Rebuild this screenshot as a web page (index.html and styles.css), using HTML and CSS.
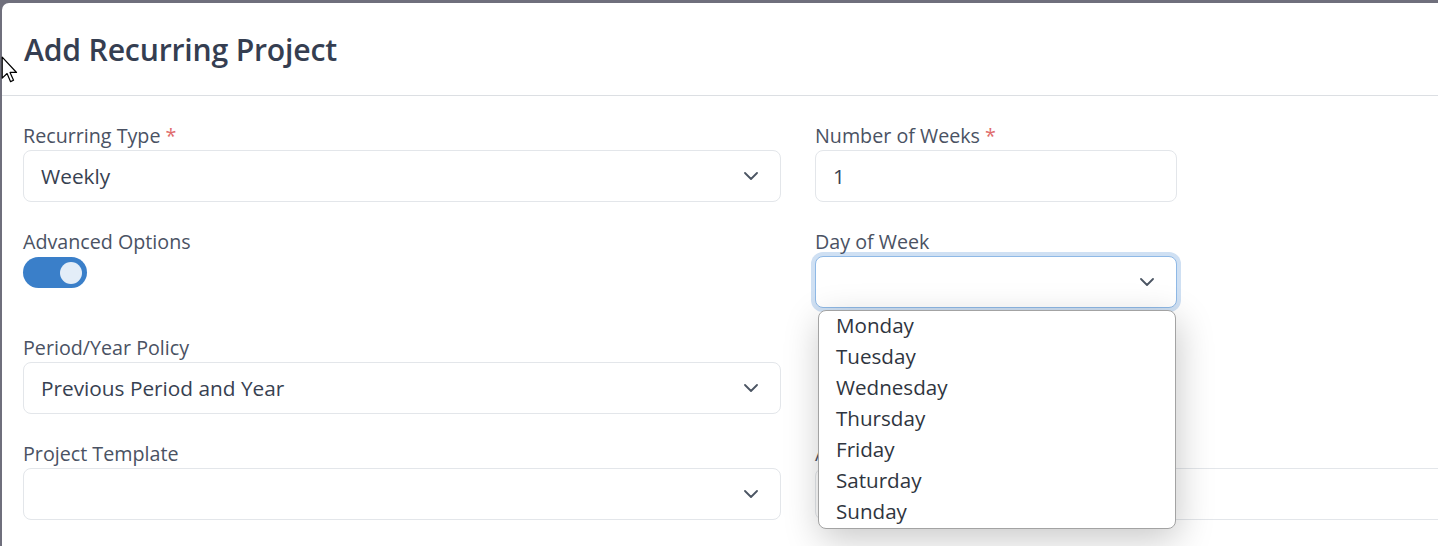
FILE: index.html
```html
<!DOCTYPE html>
<html lang="en">
<head>
<meta charset="utf-8">
<title>Add Recurring Project</title>
<link rel="stylesheet" href="styles.css">
</head>
<body>
<div class="modal">
  <div class="modal-header">
    <h1 class="modal-title">Add Recurring Project</h1>
  </div>
  <div class="modal-body">
    <div class="field">
      <label class="label">Recurring Type <span class="req">*</span></label>
      <div class="control select">
        <span class="value">Weekly</span>
        <svg class="chev" viewBox="0 0 14 8" width="14" height="8"><path d="M1 1l6 6 6-6" fill="none" stroke="#4b5563" stroke-width="1.8" stroke-linecap="round" stroke-linejoin="round"/></svg>
      </div>
    </div>
    <div class="field">
      <label class="label">Number of Weeks <span class="req">*</span></label>
      <div class="control narrow">
        <span class="value">1</span>
      </div>
    </div>
    <div class="field">
      <label class="label">Advanced Options</label>
      <div class="toggle"><span class="knob"></span></div>
    </div>
    <div class="field dow">
      <label class="label">Day of Week</label>
      <div class="control select narrow focused">
        <span class="value"></span>
        <svg class="chev" viewBox="0 0 14 8" width="14" height="8"><path d="M1 1l6 6 6-6" fill="none" stroke="#4b5563" stroke-width="1.8" stroke-linecap="round" stroke-linejoin="round"/></svg>
      </div>
      <ul class="listbox">
        <li>Monday</li>
        <li>Tuesday</li>
        <li>Wednesday</li>
        <li>Thursday</li>
        <li>Friday</li>
        <li>Saturday</li>
        <li>Sunday</li>
      </ul>
    </div>
    <div class="field">
      <label class="label">Period/Year Policy</label>
      <div class="control select">
        <span class="value">Previous Period and Year</span>
        <svg class="chev" viewBox="0 0 14 8" width="14" height="8"><path d="M1 1l6 6 6-6" fill="none" stroke="#4b5563" stroke-width="1.8" stroke-linecap="round" stroke-linejoin="round"/></svg>
      </div>
    </div>
    <div class="field"></div>
    <div class="field">
      <label class="label">Project Template</label>
      <div class="control select">
        <span class="value"></span>
        <svg class="chev" viewBox="0 0 14 8" width="14" height="8"><path d="M1 1l6 6 6-6" fill="none" stroke="#4b5563" stroke-width="1.8" stroke-linecap="round" stroke-linejoin="round"/></svg>
      </div>
    </div>
    <div class="field">
      <label class="label">Assigned To</label>
      <div class="control">
        <span class="value"></span>
      </div>
    </div>
  </div>
</div>
<svg class="cursor" viewBox="0 0 12 20" width="17" height="27"><path d="M0.6 0.8V16.4L4.2 13L6.8 19L9 18L6.4 12.2H11.2Z" fill="#fff" stroke="#000" stroke-width="0.9" stroke-linejoin="round"/></svg>
</body>
</html>
```

FILE: styles.css
```css
* { box-sizing: border-box; }
html, body { margin: 0; padding: 0; }
body {
  background: #6f6f7c;
  overflow: hidden;
  height: 546px;
  font-family: "Open Sans", "Noto Sans", sans-serif;
  color: #374151;
}
.modal {
  margin: 3px 0 0 2px;
  width: 1620px;
  height: 543px;
  background: #fff;
  border-top-left-radius: 7px;
}
.modal-header {
  height: 93px;
  display: flex;
  align-items: center;
  padding-left: 22px;
  border-bottom: 1px solid #dcdfe3;
}
.modal-title {
  margin: 0;
  font-size: 30.2px;
  font-weight: 600;
  color: #353e51;
  letter-spacing: -0.2px;
}
.modal-body {
  padding: 28px 21px;
  display: grid;
  grid-template-columns: 758px 758px;
  column-gap: 34px;
  row-gap: 28px;
  grid-auto-rows: 78px;
}
.field { position: relative; }
.label {
  display: block;
  font-size: 19.7px;
  line-height: 24px;
  color: #4a5263;
  margin-bottom: 2px;
}
.req { color: #e06c6c; }
.control {
  height: 52px;
  border: 1px solid #e3e6ea;
  border-radius: 8px;
  display: flex;
  align-items: center;
  padding: 0 22px 0 17px;
  background: #fff;
}
.narrow { width: 362px; }
.value {
  flex: 1;
  font-size: 20.8px;
  color: #374151;
}
.chev { flex: none; }
.focused {
  border-color: #8fb9e6;
  box-shadow: 0 0 0 4px #cfe0f3;
}
.toggle {
  margin-top: 3px;
  width: 64px;
  height: 31px;
  border-radius: 16px;
  background: #3a7fc9;
  position: relative;
}
.knob {
  position: absolute;
  right: 5px;
  top: 4.5px;
  width: 22px;
  height: 22px;
  border-radius: 50%;
  background: #e3edf8;
}
.dow { z-index: 5; }
.listbox {
  position: absolute;
  left: 3px;
  top: 80px;
  width: 358px;
  margin: 0;
  padding: 0;
  list-style: none;
  background: #fff;
  border: 1px solid #a3a3a3;
  border-radius: 8px;
  box-shadow: 2px 10px 36px rgba(0,0,0,0.22);
}
.listbox li {
  height: 31px;
  line-height: 28px;
  padding-left: 17px;
  font-size: 20.6px;
  color: #2f3540;
}
.cursor {
  position: absolute;
  left: 1px;
  top: 56px;
}
```
